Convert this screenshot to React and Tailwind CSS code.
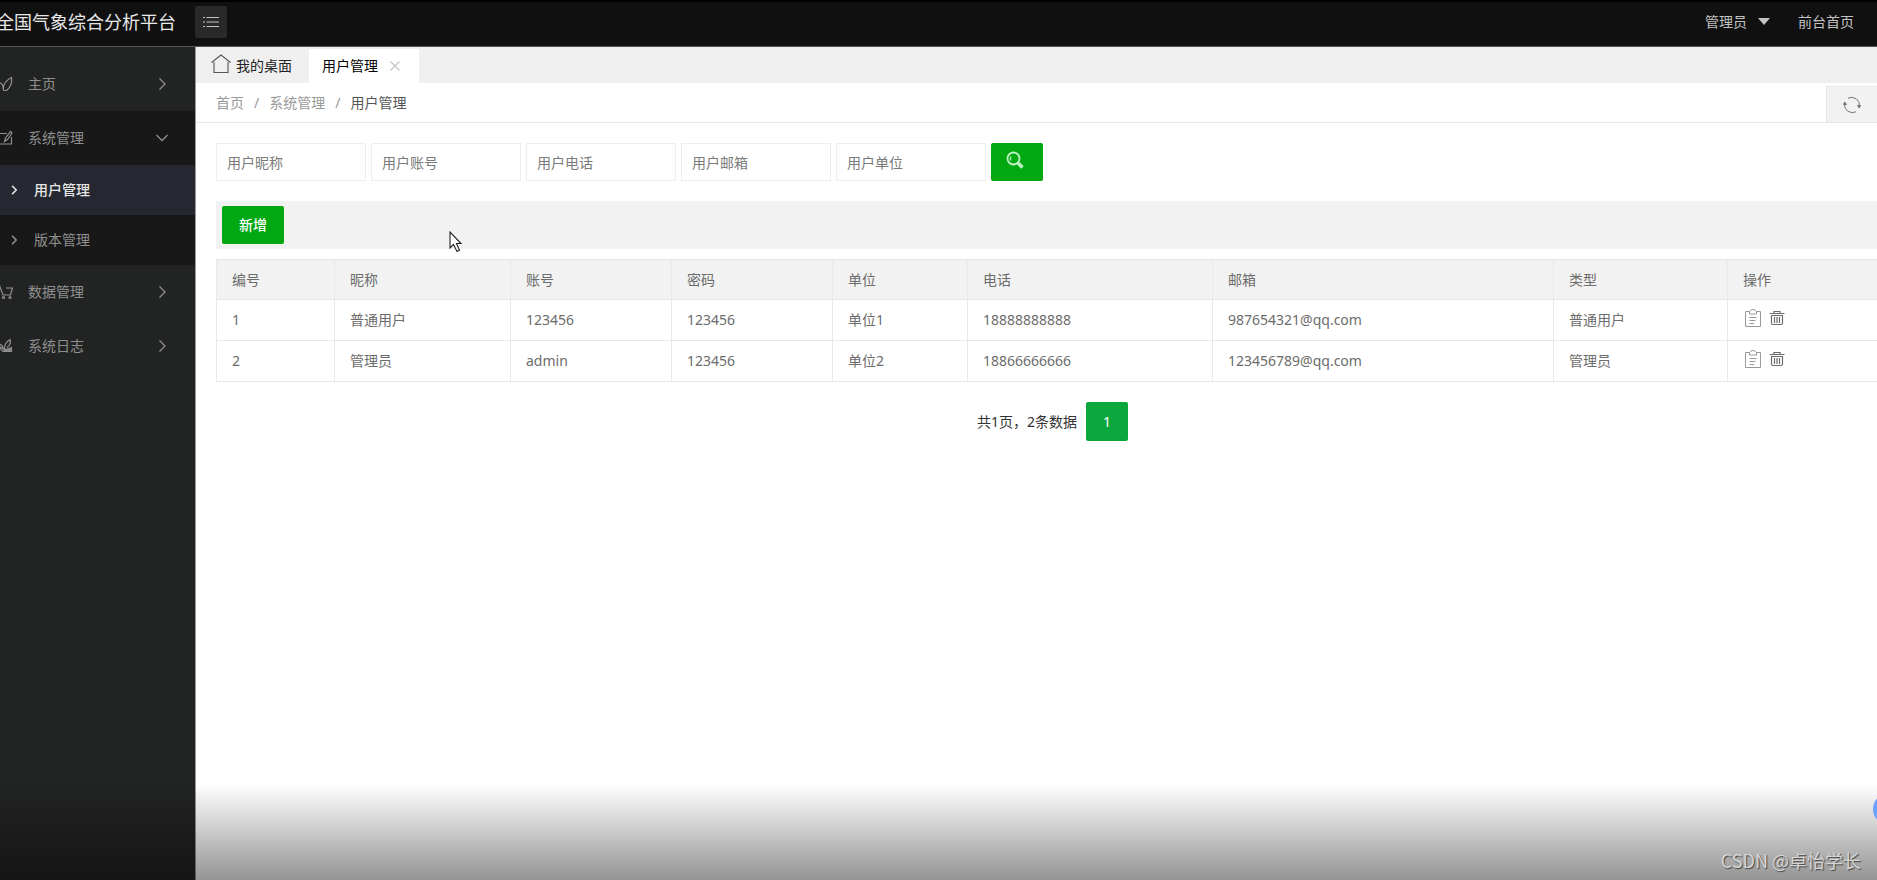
import React from "react";

function RocketIcon() {
  return (
    <svg className="h-4 w-4 shrink-0" viewBox="0 0 16 16" fill="none" stroke="currentColor" strokeWidth="1.2">
      <path d="M1 5.500 5.500 8.500 6.500 14.500Q5.500 6 14.500 1.500 15.500 10 9.500 14.500L6.500 14.500" />
    </svg>
  );
}

function EditIcon() {
  return (
    <svg className="h-4 w-4 shrink-0" viewBox="0 0 16 16" fill="none" stroke="currentColor" strokeWidth="1.2">
      <path d="M10 3.500H1v10.500H14.500V7" />
      <path d="M7.500 11.500 8.500 8 13.500 1.500 15 3 10.500 9.500Z" />
    </svg>
  );
}

function CartIcon() {
  return (
    <svg className="h-4 w-4 shrink-0" viewBox="0 0 16 16" fill="none" stroke="currentColor" strokeWidth="1.2">
      <path d="M0 1.500h2.500l3.500 9.500h7.500L15.500 4H9" />
      <circle cx="6.500" cy="13.500" r="1" />
      <circle cx="13" cy="13.500" r="1" />
    </svg>
  );
}

function LogIcon() {
  return (
    <svg className="h-4 w-4 shrink-0" viewBox="0 0 16 16" fill="none" stroke="currentColor" strokeWidth="1.2">
      <path d="M1 5.500 5 7.500 7.500 13.500Q6 6 13 1.500 14.500 6 10 9.500" />
      <path d="M1 8.500 6 13.500H14.500V9.500L9 11.500Z" />
      <path d="M8 13 14 11.500" strokeWidth="2" />
    </svg>
  );
}

function Chevron({ down = false, small = false }) {
  return (
    <svg
      className={small ? "h-3 w-3 shrink-0" : "h-4 w-4 shrink-0"}
      viewBox="0 0 16 16"
      fill="none"
      stroke="currentColor"
      strokeWidth={small ? "2" : "1.3"}
    >
      <path d={down ? "M2.500 5 8 10.500 13.500 5" : "M5.500 2.500 11 8 5.500 13.500"} />
    </svg>
  );
}

function MenuItem({ icon, label, open = false }) {
  return (
    <a
      href="#"
      className={`flex h-[54px] items-center pr-[25px] text-[#8f8f8f] ${open ? "bg-[#181818]" : ""}`}
    >
      <span className="-ml-[3px] flex w-[31px]">{icon}</span>
      <span className="flex-1">{label}</span>
      <Chevron down={open} />
    </a>
  );
}

function SubItem({ label, active = false }) {
  return (
    <a
      href="#"
      className={`flex h-[50px] items-center gap-[14px] pl-2 ${
        active ? "bg-[#252830] font-medium text-[#e6e6e6]" : "bg-[#181818] text-[#8f8f8f]"
      }`}
    >
      <Chevron small />
      {label}
    </a>
  );
}

const FIELDS = ["用户昵称", "用户账号", "用户电话", "用户邮箱", "用户单位"];
const HEADERS = ["编号", "昵称", "账号", "密码", "单位", "电话", "邮箱", "类型", "操作"];
const ROWS = [
  ["1", "普通用户", "123456", "123456", "单位1", "18888888888", "987654321@qq.com", "普通用户"],
  ["2", "管理员", "admin", "123456", "单位2", "18866666666", "123456789@qq.com", "管理员"],
];

function ClipboardIcon() {
  return (
    <svg className="h-[18px] w-[18px]" viewBox="0 0 18 18" fill="none" stroke="currentColor" strokeWidth="1">
      <path d="M5.500 2.500h-4v15h15v-15h-4M5.500 2v3h7V2M6.500 2a2.500 1.500 0 0 1 5 0" />
      <path d="M5.500 8.500h7M5.500 11.500h6M5.500 14.500h4.500" />
    </svg>
  );
}

function TrashIcon() {
  return (
    <svg className="h-4 w-4" viewBox="0 0 16 16" fill="none" stroke="currentColor" strokeWidth="1.2">
      <path d="M.5 3.500h15M5 3.500v-2h6v2M2.500 5.500V13q0 1.500 1.500 1.500h8q1.500 0 1.500-1.500V5.500Z" />
      <path d="M5.500 7v6M8 7v6M10.500 7v6" />
    </svg>
  );
}

export default function App() {
  return (
    <div className="relative flex min-h-screen flex-col overflow-hidden bg-white font-['Noto_Sans','Noto_Sans_CJK_SC',sans-serif] text-sm text-[#6c6c6c]">
      <header className="flex h-[47px] items-center border-t-2 border-b border-t-black border-b-[#555] bg-[#101010] pb-[5px] text-[#c2c2c2]">
        <h1 className="-ml-1 w-[199px] text-lg whitespace-nowrap text-[#e8e8e8]">全国气象综合分析平台</h1>
        <button aria-label="折叠菜单" className="flex h-8 w-8 items-center justify-center rounded-xs bg-[#292929]">
          <svg className="h-4 w-4" viewBox="0 0 16 16" stroke="currentColor" strokeWidth="1.2">
            <path d="M0 3.500h2M3.500 3.500H16M0 8h2M3.500 8H16M0 12.500h2M3.500 12.500H16" />
          </svg>
        </button>
        <nav className="ml-auto flex items-center gap-7 pr-[23px]">
          <button className="flex items-center gap-[11px]">
            管理员
            <svg className="h-[7px] w-3" viewBox="0 0 12 7" fill="currentColor">
              <path d="M0 0h12L6 7Z" />
            </svg>
          </button>
          <a href="#">前台首页</a>
        </nav>
      </header>

      <div className="flex flex-1">
        <aside className="w-[196px] shrink-0 border-r border-[#999] bg-[#222423] pt-[10px]">
          <MenuItem icon={<RocketIcon />} label="主页" />
          <MenuItem icon={<EditIcon />} label="系统管理" open />
          <SubItem label="用户管理" active />
          <SubItem label="版本管理" />
          <MenuItem icon={<CartIcon />} label="数据管理" />
          <MenuItem icon={<LogIcon />} label="系统日志" />
        </aside>

        <main className="min-w-0 flex-1">
          <div className="flex h-9 items-end bg-[#efefef] text-[#222]">
            <button className="flex h-[34px] w-[113px] items-center gap-[5px] pl-[15px]">
              <svg className="mb-1 h-5 w-5 text-[#555]" viewBox="0 0 20 20" fill="none" stroke="currentColor" strokeWidth="1.1">
                <path d="M.5 8.500 10 1l9.500 7.500M3 8v10.500h14V8" />
              </svg>
              我的桌面
            </button>
            <button className="flex h-[34px] w-[110px] items-center gap-3 bg-white pl-[13px] text-black">
              用户管理
              <svg className="h-[10px] w-[10px] text-[#c4c4c4]" viewBox="0 0 10 10" stroke="currentColor" strokeWidth="1.2">
                <path d="M.5.5l9 9M9.500.5l-9 9" />
              </svg>
            </button>
          </div>

          <div className="flex h-10 items-end justify-between border-b border-[#e6e6e6] pl-5">
            <nav className="flex h-full items-center gap-[10px] text-[#999]">
              <a href="#">首页</a>
              <span>/</span>
              <a href="#">系统管理</a>
              <span>/</span>
              <span className="text-[#555]">用户管理</span>
            </nav>
            <button aria-label="刷新" className="flex h-9 w-[51px] items-center justify-center border border-r-0 border-b-0 border-[#e6e6e6] bg-[#f2f2f2] text-[#777]">
              <svg className="h-[18px] w-[18px]" viewBox="0 0 18 18" fill="none" stroke="currentColor" strokeWidth="1">
                <path d="M5 2.200a8 8 0 0 1 11.500 8.300M13 15.800A8 8 0 0 1 1.500 7.500" />
                <path d="M14.500 9.500h3l-1.200 2.500ZM.5 8.500h3L1.700 6Z" fill="currentColor" />
              </svg>
            </button>
          </div>

          <div className="pt-5 pl-5">
            <form className="flex gap-[5px]" onSubmit={(e) => e.preventDefault()}>
              {FIELDS.map((f) => (
                <input
                  key={f}
                  type="text"
                  aria-label={f}
                  placeholder={f}
                  className="h-[38px] w-[150px] border border-[#eee] bg-white px-[10px] placeholder:text-[#7a7a7a]"
                />
              ))}
              <button aria-label="搜索" className="flex h-[38px] w-[52px] items-center justify-center rounded-xs bg-[#02a812] pr-1 pb-1 text-[#bdf0c0]">
                <svg className="h-[18px] w-[18px]" viewBox="0 0 18 18" fill="none" stroke="currentColor" strokeWidth="1.8">
                  <circle cx="7.500" cy="7.500" r="6" />
                  <path d="M5 5.500a3.500 3.500 0 0 0 0 4" strokeWidth="1.2" />
                  <path d="m12 12 4.500 4.500" strokeWidth="3.500" />
                </svg>
              </button>
            </form>

            <div className="mt-5 flex h-12 items-center bg-[#f2f2f2] pl-[6px]">
              <button className="h-[38px] w-[62px] rounded-xs bg-[#02a812] font-medium text-white">新增</button>
            </div>

            <table className="mt-[10px] w-full table-fixed border-collapse text-left">
              <colgroup>
                <col className="w-[118px]" />
                <col className="w-[176px]" />
                <col className="w-[161px]" />
                <col className="w-[161px]" />
                <col className="w-[135px]" />
                <col className="w-[245px]" />
                <col className="w-[341px]" />
                <col className="w-[174px]" />
                <col />
              </colgroup>
              <thead>
                <tr className="h-10 bg-[#f2f2f2]">
                  {HEADERS.map((h) => (
                    <th key={h} className="border border-[#e8e8e8] px-[15px] font-normal last:border-r-0">
                      {h}
                    </th>
                  ))}
                </tr>
              </thead>
              <tbody>
                {ROWS.map((row) => (
                  <tr key={row[0]} className="h-[41px]">
                    {row.map((cell, i) => (
                      <td key={i} className="border border-[#e8e8e8] px-[15px]">
                        {cell}
                      </td>
                    ))}
                    <td className="border border-r-0 border-[#e8e8e8] px-4">
                      <div className="flex items-center gap-[7px] pb-1">
                        <button aria-label="编辑" className="text-[#999]"><ClipboardIcon /></button>
                        <button aria-label="删除"><TrashIcon /></button>
                      </div>
                    </td>
                  </tr>
                ))}
              </tbody>
            </table>

            <div className="mt-5 flex items-center justify-center gap-[9px] pl-3 text-[#333]">
              <span>共1页，2条数据</span>
              <button className="h-[39px] w-[42px] rounded-xs bg-[#0aa83c] text-white">1</button>
            </div>
          </div>
        </main>
      </div>

      <div className="pointer-events-none absolute inset-x-0 bottom-0 h-24 bg-linear-to-b from-black/0 to-black/42" />
      <div className="absolute -right-7 bottom-[55px] h-8 w-8 rounded-full bg-[#6ba1ff]" />
      <div className="absolute right-4 bottom-[6px] font-['Noto_Sans_CJK_SC',sans-serif] text-lg text-[#d6d6d6] [text-shadow:1px_1px_1px_#444]">
        CSDN @卓怡学长
      </div>
      <svg className="pointer-events-none absolute top-[231px] left-[449px] h-[22px] w-[14px]" viewBox="0 0 14 22" fill="white" stroke="#222" strokeWidth="1.1">
        <path d="M1 1v16l3.500-3.500L8 20.500l2.500-1.300L7.500 12.500H12Z" />
      </svg>
    </div>
  );
}
